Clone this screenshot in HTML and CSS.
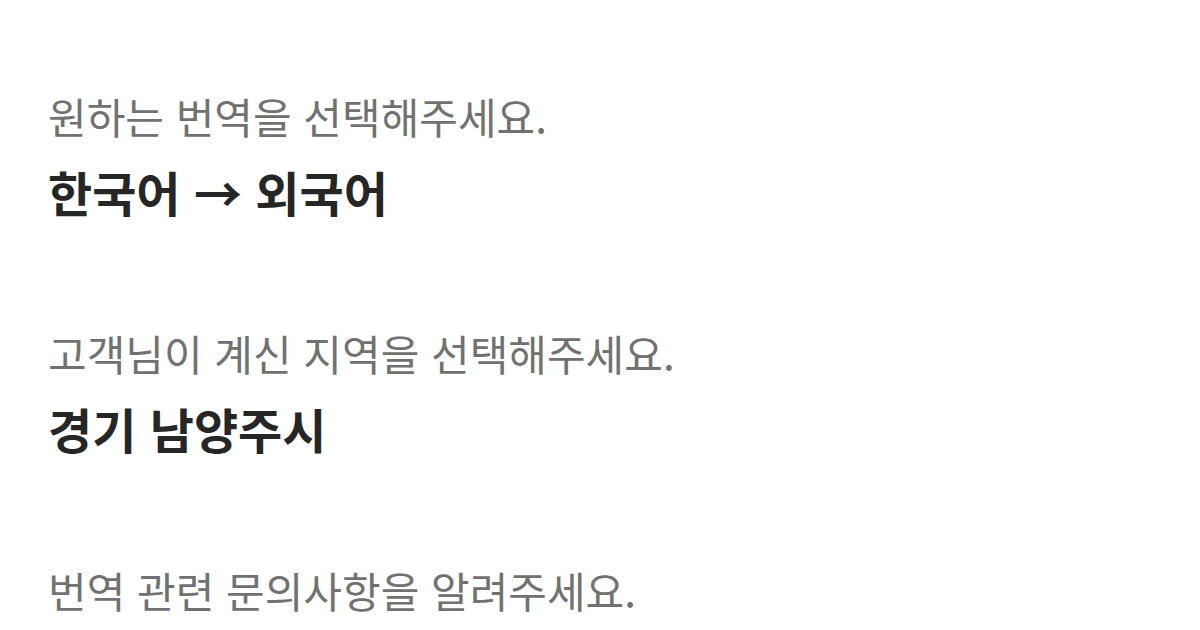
FILE: index.html
```html
<!DOCTYPE html>
<html lang="ko">
<head>
    <meta charset="UTF-8" />
    <meta name="viewport" content="width=device-width, initial-scale=1" />
    <title>번역 신청</title>
    <link rel="stylesheet" href="styles.css">
</head>
<body>

    <section class="field">
        <p class="field-label">원하는 번역을 선택해주세요.</p>
        <p class="field-value">한국어 → 외국어</p>
    </section>

    <section class="field">
        <p class="field-label">고객님이 계신 지역을 선택해주세요.</p>
        <p class="field-value">경기 남양주시</p>
    </section>

    <section class="field">
        <p class="field-label">번역 관련 문의사항을 알려주세요.</p>
    </section>

</body>
</html>
```

FILE: styles.css
```css
body {
    font-family: "Noto Sans CJK KR", "Noto Sans", sans-serif;
    background: #fff;
    margin: 0;
    padding: 90px 48px 0;
    color: #262626;
}
.field {
    margin-bottom: 104px;
}
.field p {
    margin: 0;
}
/* 질문 문구 */
.field-label {
    font-size: 42px;
    line-height: 52px;
    color: #717171;
}
/* 선택된 값 */
.field-value {
    font-size: 48px;
    line-height: 64px;
    font-weight: 600;
    margin-top: 17px !important;
    color: #262626;
}
```
